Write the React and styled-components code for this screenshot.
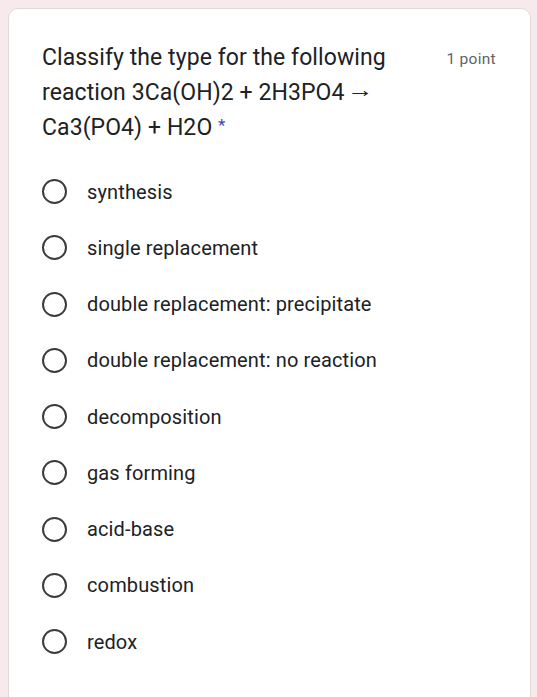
import styled, { createGlobalStyle } from "styled-components";

const GlobalStyle = createGlobalStyle`
  html, body {
    margin: 0;
    padding: 0;
    background: #f8e9ed;
  }
  body {
    font-family: Roboto, "Liberation Sans", sans-serif;
    -webkit-font-smoothing: antialiased;
  }
`;

const options = [
  "synthesis",
  "single replacement",
  "double replacement: precipitate",
  "double replacement: no reaction",
  "decomposition",
  "gas forming",
  "acid-base",
  "combustion",
  "redox",
];

export default function App() {
  return (
    <>
      <GlobalStyle />
      <Page>
        <Card>
          <Header>
            <Question>
              Classify the type for the following reaction 3Ca(OH)2 + 2H3PO4{" "}
              <Arrow>→</Arrow> Ca3(PO4) + H2O <Required>*</Required>
            </Question>
            <Points>1 point</Points>
          </Header>
          <OptionList>
            {options.map((label) => (
              <Option key={label}>
                <Radio />
                <OptionLabel>{label}</OptionLabel>
              </Option>
            ))}
          </OptionList>
        </Card>
      </Page>
    </>
  );
}

const Page = styled.div`
  padding: 8px 6px 0 8px;
  height: 697px;
  box-sizing: border-box;
  overflow: hidden;
`;

const Card = styled.div`
  background: #ffffff;
  border: 1px solid #dcdcdc;
  border-radius: 10px;
  min-height: 720px;
  padding: 31px 33px 0 33px;
  box-sizing: border-box;
`;

const Header = styled.div`
  display: flex;
  justify-content: space-between;
  align-items: flex-start;
`;

const Question = styled.div`
  width: 360px;
  font-size: 23px;
  line-height: 35px;
  color: #202124;
  letter-spacing: 0.08px;
`;

const Arrow = styled.span`
  display: inline-block;
  font-size: 21px;
  line-height: 1;
  transform: scaleX(1.25) translateY(-3px);
`;

const Required = styled.span`
  color: #3949ab;
  font-size: 17px;
  vertical-align: top;
  line-height: 30px;
`;

const Points = styled.div`
  font-size: 15.5px;
  color: #5f6368;
  letter-spacing: 0.3px;
  padding-top: 10px;
  margin-right: 1px;
`;

const OptionList = styled.div`
  display: flex;
  flex-direction: column;
  gap: 31px;
  margin-top: 34px;
`;

const Option = styled.label`
  display: flex;
  align-items: center;
  gap: 20px;
  height: 25.25px;
`;

const Radio = styled.span`
  width: 21px;
  height: 21px;
  border: 2.5px solid #3c3c3c;
  border-radius: 50%;
  flex-shrink: 0;
`;

const OptionLabel = styled.span`
  font-size: 20px;
  color: #202124;
  letter-spacing: 0.13px;
`;
